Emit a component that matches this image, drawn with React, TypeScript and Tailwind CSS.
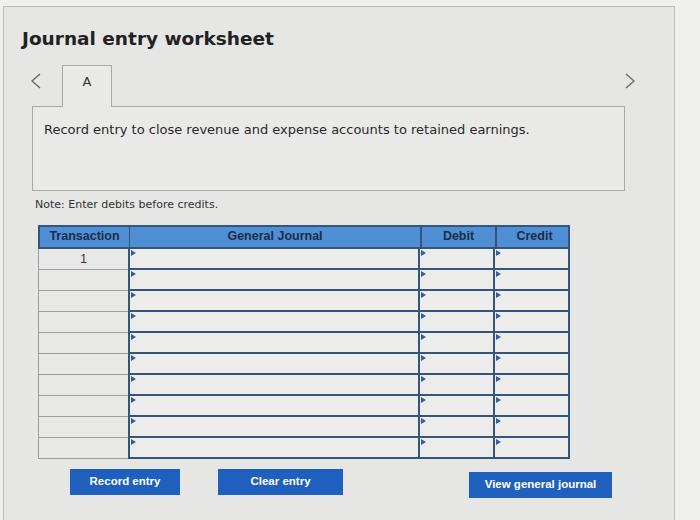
import React from 'react';

const rows = Array.from({ length: 10 }, (_, i) => i);

const Marker = () => (
  <span className="absolute left-[1px] top-[1px] w-0 h-0 border-y-[3px] border-y-transparent border-l-[5px] border-l-[#2f5f9e]" />
);

const Chevron = ({ dir }: { dir: 'left' | 'right' }) => (
  <svg width="12" height="16" viewBox="0 0 12 16" fill="none" stroke="#6b6b6b" strokeWidth="1.4">
    {dir === 'left' ? <path d="M10 1 L2 8 L10 15" /> : <path d="M2 1 L10 8 L2 15" />}
  </svg>
);

export default function App() {
  return (
    <div className="w-[700px] h-[520px] bg-[#efefed] overflow-hidden" style={{ fontFamily: '"DejaVu Sans", Verdana, sans-serif' }}>
      <div className="ml-[3px] mt-[6px] w-[672px] h-[520px] border border-[#bdbdbb] bg-[#e6e6e4]">
        {/* Title */}
        <h1 className="pl-[18px] pt-[20px] text-[18.5px] leading-[24px] font-bold text-[#222]">Journal entry worksheet</h1>

        <div className="pl-[28px] mt-[14px]">
          {/* Tab row */}
          <div className="relative z-10 flex items-end h-[41px] w-[604px]">
            <div className="-ml-[2px] mb-[17px]"><Chevron dir="left" /></div>
            <div className="ml-[20px] w-[50px] h-[42px] -mb-px border border-b-0 border-[#a9a9a7] bg-[#e9e9e7] flex justify-center pt-[6px] text-[13px] text-[#333]">
              A
            </div>
            <div className="ml-auto mb-[17px]"><Chevron dir="right" /></div>
          </div>

          {/* Content box */}
          <div className="w-[593px] h-[85px] border border-[#a9a9a7] bg-[#e9e9e7] pl-[11px] pt-[13px] text-[13px] text-[#2a2a2a]">
            Record entry to close revenue and expense accounts to retained earnings.
          </div>

          <p className="mt-[6px] ml-[3px] text-[11px] text-[#333]">Note: Enter debits before credits.</p>

          {/* Table */}
          <div className="ml-[6px] mt-[11px] w-[532px]" style={{ fontFamily: '"Liberation Sans", Arial, sans-serif' }}>
            <div className="grid grid-cols-[90px_292px_75px_75px] h-[24px] bg-[#4f8fd6] border-2 border-[#36557a] text-[12.5px] font-bold text-[#1b2d48]">
              <div className="flex items-center justify-center border-r border-[#36557a]">Transaction</div>
              <div className="flex items-center justify-center border-r-2 border-[#36557a]">General Journal</div>
              <div className="flex items-center justify-center border-r-2 border-[#36557a]">Debit</div>
              <div className="flex items-center justify-center">Credit</div>
            </div>
            {rows.map((i) => (
              <div key={i} className="grid grid-cols-[90px_292px_75px_75px] h-[21px]">
                <div className="border-l border-b border-[#9d9d9b] bg-[#e8e8e6] flex items-center justify-center text-[12px] text-[#333]">
                  {i === 0 ? '1' : ''}
                </div>
                <div className="relative border-l-2 border-r-2 border-b-2 border-[#36557a] bg-[#ececea]"><Marker /></div>
                <div className="relative border-r-2 border-b-2 border-[#36557a] bg-[#ececea]"><Marker /></div>
                <div className="relative border-r-2 border-b-2 border-[#36557a] bg-[#ececea]"><Marker /></div>
              </div>
            ))}
          </div>

          {/* Buttons */}
          <div className="mt-[10px] flex items-start text-[11.5px] font-bold text-white" style={{ fontFamily: '"Liberation Sans", Arial, sans-serif' }}>
            <button className="ml-[38px] w-[110px] h-[26px] bg-[#1f5fbe]">Record entry</button>
            <button className="ml-[38px] w-[125px] h-[26px] bg-[#1f5fbe]">Clear entry</button>
            <button className="ml-[126px] mt-[3px] w-[143px] h-[26px] bg-[#1f5fbe]">View general journal</button>
          </div>
        </div>
      </div>
    </div>
  );
}
